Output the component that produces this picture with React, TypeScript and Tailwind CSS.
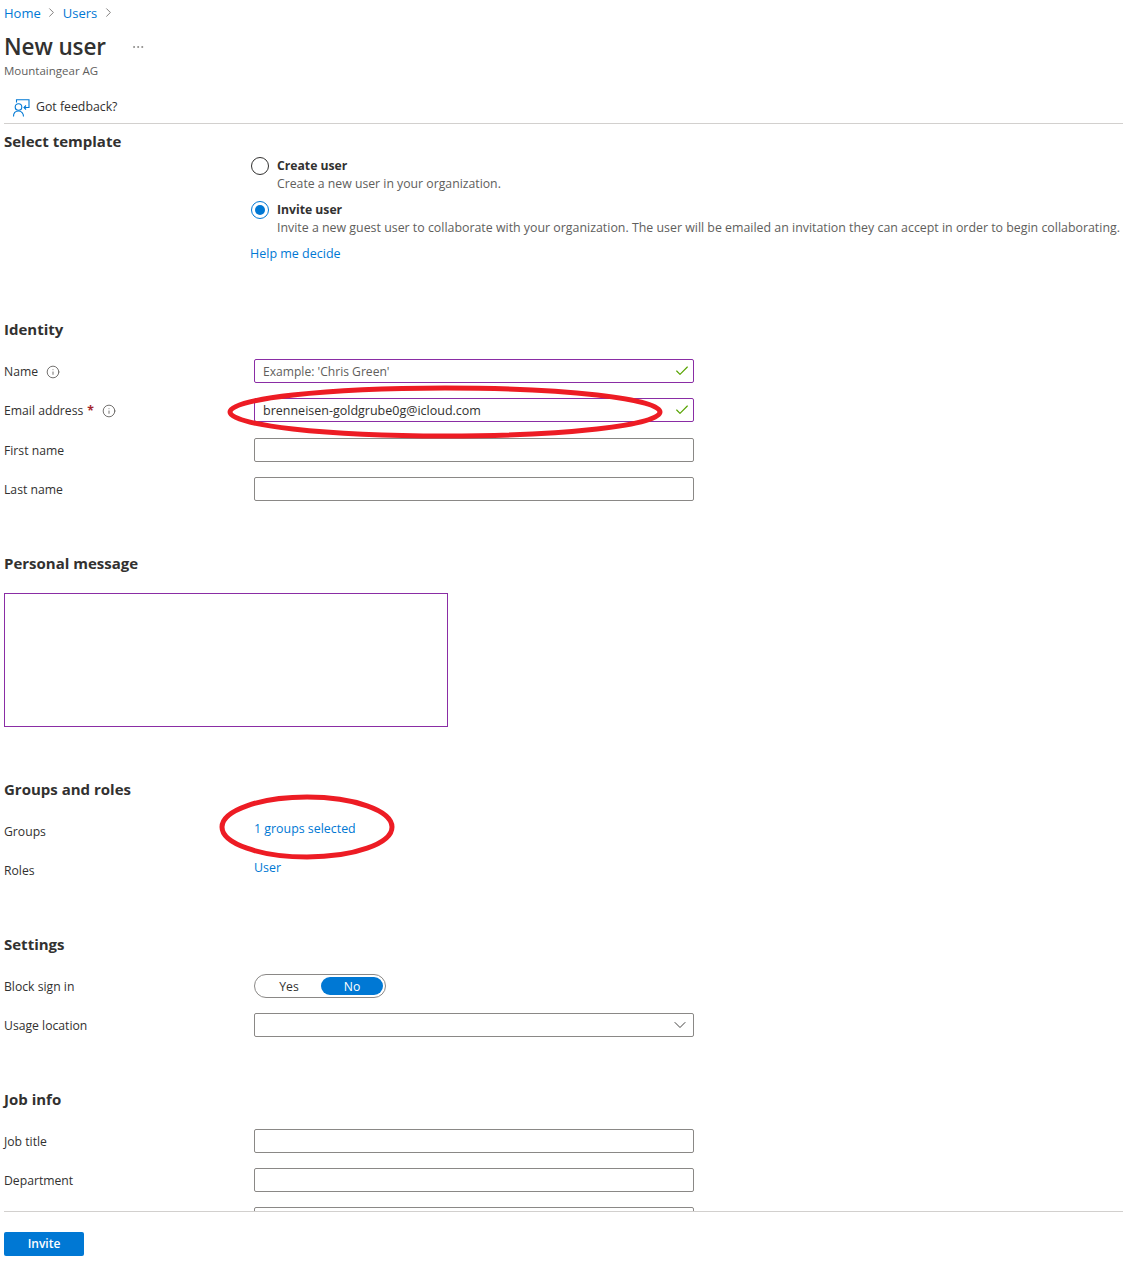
import { ChevronRight, ChevronDown, Check, Info, Ellipsis } from 'lucide-react';
import type { ReactNode } from 'react';

function Heading({ children, className }: { children: ReactNode; className: string }) {
  return <h2 className={`text-[15px] leading-5 font-bold text-[#323130] ${className}`}>{children}</h2>;
}

function Label({ text, required, info }: { text: string; required?: boolean; info?: boolean }) {
  return (
    <div className="w-[250px] shrink-0 h-6 pt-[2px] flex items-center text-[12.2px] text-[#323130]">
      <span>{text}</span>
      {required && <span className="ml-1 font-bold text-[#a4262c]">*</span>}
      {info && <Info className="ml-[8px] w-[14px] h-[14px] text-[#605e5c]" strokeWidth={1.5} />}
    </div>
  );
}

function Field({ value, placeholder, valid }: { value?: string; placeholder?: string; valid?: boolean }) {
  return (
    <div
      className={`w-[440px] h-6 rounded-[2px] border flex items-center pl-2 pr-[3px] ${valid ? 'border-[#8a2da5]' : 'border-[#8a8886]'}`}
    >
      <input
        readOnly
        defaultValue={value}
        placeholder={placeholder}
        className="flex-1 min-w-0 pt-[2px] outline-none text-[12.5px] text-[#323130] placeholder:text-[12.1px] placeholder:text-[#605e5c]"
      />
      {valid && <Check className="w-4 h-4 text-[#57a300]" strokeWidth={1.75} />}
    </div>
  );
}

function Row({ children }: { children: ReactNode }) {
  return <div className="flex items-center">{children}</div>;
}

export default function App() {
  return (
    <div className="relative h-[1263px] w-[1123px] flex flex-col overflow-hidden bg-white font-['Open_Sans','Noto_Sans',sans-serif] text-[#323130]">
      <div className="flex-1 min-h-0 overflow-hidden">
        {/* Breadcrumb and title */}
        <nav className="pl-1 pt-[4px] h-[21px] flex items-center text-[13px] leading-4 text-[#0078d4]">
          <span>Home</span>
          <ChevronRight className="mx-[3.5px] w-[15px] h-[15px] text-[#605e5c]" strokeWidth={1.25} />
          <span>Users</span>
          <ChevronRight className="mx-[3.5px] w-[15px] h-[15px] text-[#605e5c]" strokeWidth={1.25} />
        </nav>
        <div className="pl-1 mt-[10px] flex items-center h-8">
          <h1 className="text-[22.5px] leading-8 font-semibold tracking-[-0.1px]">New user</h1>
          <Ellipsis className="ml-[25px] w-[14px] h-[14px] text-[#605e5c]" strokeWidth={1} />
        </div>
        <div className="pl-1 text-[11.5px] leading-4 text-[#605e5c]">Mountaingear AG</div>
        <div className="mt-[10px] h-[34px] ml-1 pl-2 pt-[3px] flex items-center gap-[6px] text-[12.3px]">
          <svg viewBox="0 0 18 18" className="w-[18px] h-[18px] text-[#0078d4]" fill="none" stroke="currentColor" strokeWidth="1.1">
            <circle cx="6.5" cy="8" r="3.3" />
            <path d="M1.5 17.5c0-3.300 2-5.500 5-5.500s5 2.200 5 5.500" />
            <path d="M4.5 3.500V.7h12.500v7.800h-4.500M14 6.500l-2 2 2 2" />
          </svg>
          <span>Got feedback?</span>
        </div>
        <div className="ml-1 h-px bg-[#d2d0ce]" />

        {/* Select template */}
        <div className="pl-1">
          <Heading className="mt-[7px]">Select template</Heading>
          <div className="ml-[247px] mt-[6px] w-[872px]">
            <div className="flex items-center h-[18px] gap-2">
              <span className="w-[18px] h-[18px] rounded-full border border-[#323130]" />
              <span className="text-[12.2px] font-bold">Create user</span>
            </div>
            <div className="ml-[26px] text-[12.25px] leading-[18px] text-[#605e5c]">Create a new user in your organization.</div>
            <div className="flex items-center h-[18px] gap-2 mt-2">
              <span className="w-[18px] h-[18px] rounded-full border border-[#0078d4] flex items-center justify-center">
                <span className="w-[10px] h-[10px] rounded-full bg-[#0078d4]" />
              </span>
              <span className="text-[12.2px] font-bold">Invite user</span>
            </div>
            <div className="ml-[26px] text-[12.38px] leading-[18px] text-[#605e5c] whitespace-nowrap">
              Invite a new guest user to collaborate with your organization. The user will be emailed an invitation they can accept in order to begin collaborating.
            </div>
            <div className="mt-2 -ml-px text-[12.5px] leading-[18px] text-[#0078d4]">Help me decide</div>
          </div>

          {/* Identity */}
          <Heading className="mt-[56px]">Identity</Heading>
          <div className="mt-5 flex flex-col gap-[15.4px]">
            <Row><Label text="Name" info /><Field placeholder="Example: 'Chris Green'" valid /></Row>
            <Row><Label text="Email address" required info /><Field value="brenneisen-goldgrube0g@icloud.com" valid /></Row>
            <Row><Label text="First name" /><Field /></Row>
            <Row><Label text="Last name" /><Field /></Row>
          </div>

          {/* Personal message */}
          <Heading className="mt-[52px]">Personal message</Heading>
          <textarea readOnly className="block mt-5 w-[444px] h-[134px] resize-none outline-none rounded-none border border-[#8a2da5]" />

          {/* Groups and roles */}
          <Heading className="mt-[52px]">Groups and roles</Heading>
          <div className="mt-5 flex flex-col gap-[15px]">
            <Row>
              <Label text="Groups" />
              <span className="-mt-[5px] text-[12.4px] leading-6 text-[#0078d4]">1 groups selected</span>
            </Row>
            <Row>
              <Label text="Roles" />
              <span className="-mt-[5px] text-[12.4px] leading-6 text-[#0078d4]">User</span>
            </Row>
          </div>

          {/* Settings */}
          <Heading className="mt-[52px]">Settings</Heading>
          <div className="mt-5 flex flex-col gap-[15px]">
            <Row>
              <Label text="Block sign in" />
              <div className="w-[132px] h-6 rounded-full border border-[#8a8886] p-[2px] flex items-center text-[12.2px]">
                <span className="w-[64px] pt-[2px] text-center">Yes</span>
                <span className="flex-1 h-[18px] leading-[19px] rounded-full bg-[#0078d4] text-white text-center">No</span>
              </div>
            </Row>
            <Row>
              <Label text="Usage location" />
              <div className="w-[440px] h-6 rounded-[2px] border border-[#8a8886] flex items-center justify-end pr-[3px]">
                <ChevronDown className="w-[20px] h-[20px] text-[#323130]" strokeWidth={1.1} />
              </div>
            </Row>
          </div>

          {/* Job info */}
          <Heading className="mt-[52px]">Job info</Heading>
          <div className="mt-5 flex flex-col gap-[15px]">
            <Row><Label text="Job title" /><Field /></Row>
            <Row><Label text="Department" /><Field /></Row>
            <Row><Label text="" /><Field /></Row>
          </div>
        </div>
      </div>

      {/* Footer */}
      <div className="h-[52px] shrink-0 ml-1 border-t border-[#d2d0ce] pt-[20px]">
        <button className="block w-20 h-6 rounded-[2px] bg-[#0078d4] text-white text-[12px] font-semibold">Invite</button>
      </div>

      {/* Red annotation circles drawn on top of the screenshot */}
      <svg viewBox="0 0 1123 1263" className="absolute inset-0 w-[1123px] h-[1263px] pointer-events-none" fill="none" stroke="#ed1c24" strokeWidth="5">
        <ellipse cx="445" cy="412" rx="215" ry="24" />
        <ellipse cx="307" cy="827" rx="85" ry="30" />
      </svg>
    </div>
  );
}
